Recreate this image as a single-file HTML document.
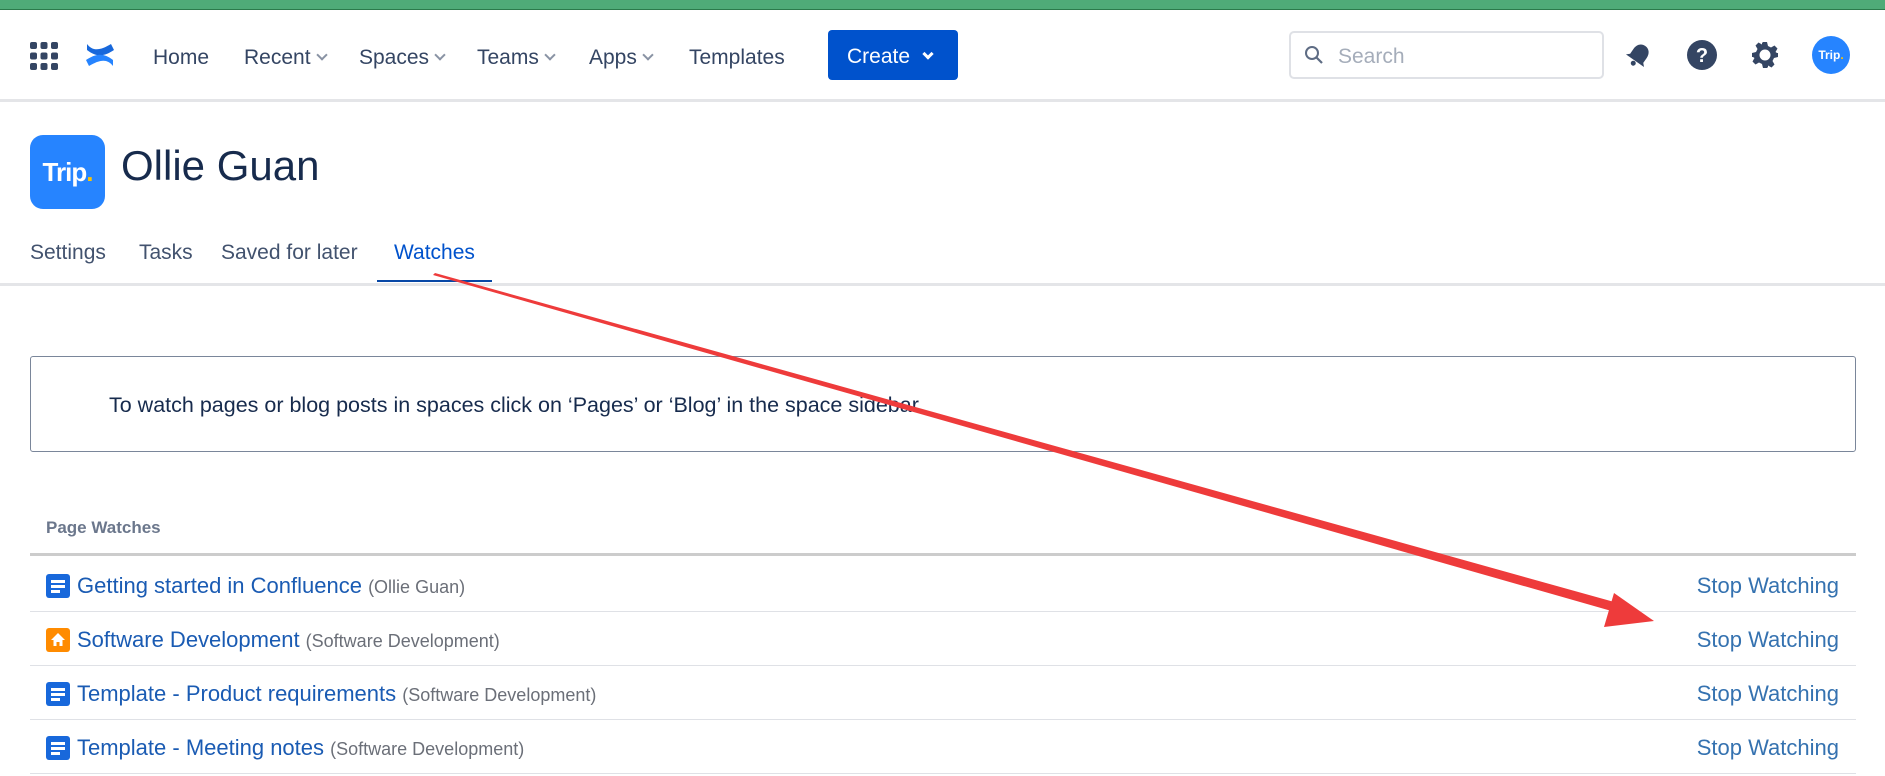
<!DOCTYPE html>
<html><head><meta charset="utf-8"><style>
*{margin:0;padding:0;box-sizing:border-box}
body{width:1885px;height:776px;overflow:hidden;background:#fff;font-family:"Liberation Sans",sans-serif;color:#172b4d;position:relative}
.a{position:absolute;white-space:nowrap}
.nav{font-size:21px;color:#344563;top:46px}
.chev{display:inline-block;width:8px;height:8px;border-right:2px solid #8993a4;border-bottom:2px solid #8993a4;transform:rotate(45deg);margin-left:7px;position:relative;top:-5px}
.tab{font-size:21px;color:#42526e;top:241px}
.row{position:absolute;left:30px;width:1826px;height:54px;border-bottom:1px solid #dfe1e6}
.ic{position:absolute;left:16px;top:16px;width:24px;height:24px;border-radius:3px;background:#1868db}
.ic i{position:absolute;left:5px;height:2.5px;background:#fff}
.lk{position:absolute;left:47px;top:15px;font-size:22px;color:#1a5bb3;white-space:nowrap}
.lk span{font-size:18px;color:#6b6f78}
.sw{position:absolute;right:17px;top:15px;font-size:22px;color:#3572b0}
</style></head><body>
<div class="a" style="left:0;top:0;width:1885px;height:10px;background:#4fab78;border-bottom:1px solid #2b7a4b"></div>
<div class="a" style="left:0;top:99px;width:1885px;height:3px;background:#e4e5e8"></div>
<svg class="a" style="left:30px;top:42px" width="28" height="28"><g fill="#344563">
<rect x="0" y="0" width="7" height="7" rx="2"/><rect x="10.5" y="0" width="7" height="7" rx="2"/><rect x="21" y="0" width="7" height="7" rx="2"/>
<rect x="0" y="10.5" width="7" height="7" rx="2"/><rect x="10.5" y="10.5" width="7" height="7" rx="2"/><rect x="21" y="10.5" width="7" height="7" rx="2"/>
<rect x="0" y="21" width="7" height="7" rx="2"/><rect x="10.5" y="21" width="7" height="7" rx="2"/><rect x="21" y="21" width="7" height="7" rx="2"/></g></svg>
<svg class="a" style="left:85px;top:40px" width="30" height="30" viewBox="0 0 30 30"><path d="M2 4 C8 12 16 10 26 4 L29 10 C20 16 12 18 2 10Z" fill="#1868db"/><path d="M28 26 C22 18 14 20 4 26 L1 20 C10 14 18 12 28 20Z" fill="#2684ff"/></svg>
<div class="a nav" style="left:153px">Home</div>
<div class="a nav" style="left:244px">Recent<span class="chev"></span></div>
<div class="a nav" style="left:359px">Spaces<span class="chev"></span></div>
<div class="a nav" style="left:477px">Teams<span class="chev"></span></div>
<div class="a nav" style="left:589px">Apps<span class="chev"></span></div>
<div class="a nav" style="left:689px">Templates</div>
<div class="a" style="left:828px;top:30px;width:130px;height:50px;background:#0052cc;border-radius:4px;color:#fff;font-size:21px;padding:15px 0 0 19px">Create<span class="chev" style="border-color:#fff;margin-left:14px;border-width:3px"></span></div>
<div class="a" style="left:1289px;top:31px;width:315px;height:48px;border:2px solid #dfe1e6;border-radius:5px"></div>
<svg class="a" style="left:1304px;top:45px" width="20" height="20"><circle cx="8" cy="8" r="6" fill="none" stroke="#5e6c84" stroke-width="2"/><path d="M12.5 12.5L18 18" stroke="#5e6c84" stroke-width="2.2"/></svg>
<div class="a" style="left:1338px;top:45px;font-size:21px;color:#a5adba">Search</div>
<svg class="a" style="left:1625px;top:41px" width="28" height="28" viewBox="0 0 28 28"><g transform="rotate(35 14 14)"><path d="M14 3c-5 0-8 4-8 9v6l-3 3h22l-3-3v-6c0-5-3-9-8-9z" fill="#344563"/><circle cx="14" cy="24" r="2.5" fill="#344563"/></g></svg>
<svg class="a" style="left:1686px;top:39px" width="32" height="32"><circle cx="16" cy="16" r="15" fill="#344563"/><text x="16" y="23" font-family="Liberation Sans" font-weight="bold" font-size="20" fill="#fff" text-anchor="middle">?</text></svg>
<svg class="a" style="left:1751px;top:41px" width="28" height="28" viewBox="0 0 28 28"><path d="M12 1h4l1 4 3 1.5 3.5-2 3 3-2 3.5L26 12l1 0v4l-4 1-1.5 3 2 3.5-3 3-3.5-2L17 26l-1 1h-4l-1-4-3-1.5-3.5 2-3-3 2-3.5L2 16 1 16v-4l4-1 1.5-3-2-3.5 3-3 3.5 2L11 2z" fill="#344563"/><circle cx="14" cy="14" r="5.5" fill="#fff"/></svg>
<div class="a" style="left:1812px;top:36px;width:38px;height:38px;border-radius:50%;background:#2684ff;color:#fff;font-size:12px;font-weight:bold;text-align:center;line-height:38px">Trip<span style="color:#ffc400">.</span></div>
<div class="a" style="left:30px;top:135px;width:75px;height:74px;border-radius:13px;background:#2684ff;color:#fff;font-size:26px;font-weight:bold;text-align:center;line-height:74px;letter-spacing:-1px">Trip<span style="color:#ffc400">.</span></div>
<div class="a" style="left:121px;top:142px;font-size:42px;color:#172b4d">Ollie Guan</div>
<div class="a tab" style="left:30px">Settings</div>
<div class="a tab" style="left:139px">Tasks</div>
<div class="a tab" style="left:221px">Saved for later</div>
<div class="a tab" style="left:394px;color:#0052cc">Watches</div>
<div class="a" style="left:377px;top:280px;width:115px;height:2px;background:#0747a6"></div>
<div class="a" style="left:0;top:283px;width:1885px;height:3px;background:#e4e5e8"></div>
<div class="a" style="left:30px;top:356px;width:1826px;height:96px;border:1px solid #7a869a;border-radius:3px"></div>
<div class="a" style="left:109px;top:393px;font-size:21.5px;color:#172b4d">To watch pages or blog posts in spaces click on ‘Pages’ or ‘Blog’ in the space sidebar.</div>
<div class="a" style="left:46px;top:518px;font-size:17px;font-weight:bold;color:#6b778c">Page Watches</div>
<div class="a" style="left:30px;top:553px;width:1826px;height:3px;background:#ccc"></div>
<div class="row" style="top:558px"><div class="ic"><i style="top:6px;width:14px"></i><i style="top:11px;width:14px"></i><i style="top:16px;width:9px"></i></div><div class="lk">Getting started in Confluence <span>(Ollie Guan)</span></div><div class="sw">Stop Watching</div></div>
<div class="row" style="top:612px"><div class="ic" style="background:#ff8b00"><svg width="24" height="24" style="position:absolute;left:0;top:0"><path d="M12 5L5 12h2.5v6h3v-4h3v4h3v-6H19z" fill="#fff"/></svg></div><div class="lk">Software Development <span>(Software Development)</span></div><div class="sw">Stop Watching</div></div>
<div class="row" style="top:666px"><div class="ic"><i style="top:6px;width:14px"></i><i style="top:11px;width:14px"></i><i style="top:16px;width:9px"></i></div><div class="lk">Template - Product requirements <span>(Software Development)</span></div><div class="sw">Stop Watching</div></div>
<div class="row" style="top:720px"><div class="ic"><i style="top:6px;width:14px"></i><i style="top:11px;width:14px"></i><i style="top:16px;width:9px"></i></div><div class="lk">Template - Meeting notes <span>(Software Development)</span></div><div class="sw">Stop Watching</div></div>
<svg class="a" style="left:0;top:0" width="1885" height="776"><path d="M435 273 L1625 605 L1622 614 L433 275Z" fill="#ee3b3b"/><path d="M1654 621 L1614 593 L1604 627Z" fill="#ee3b3b"/></svg>
</body></html>
